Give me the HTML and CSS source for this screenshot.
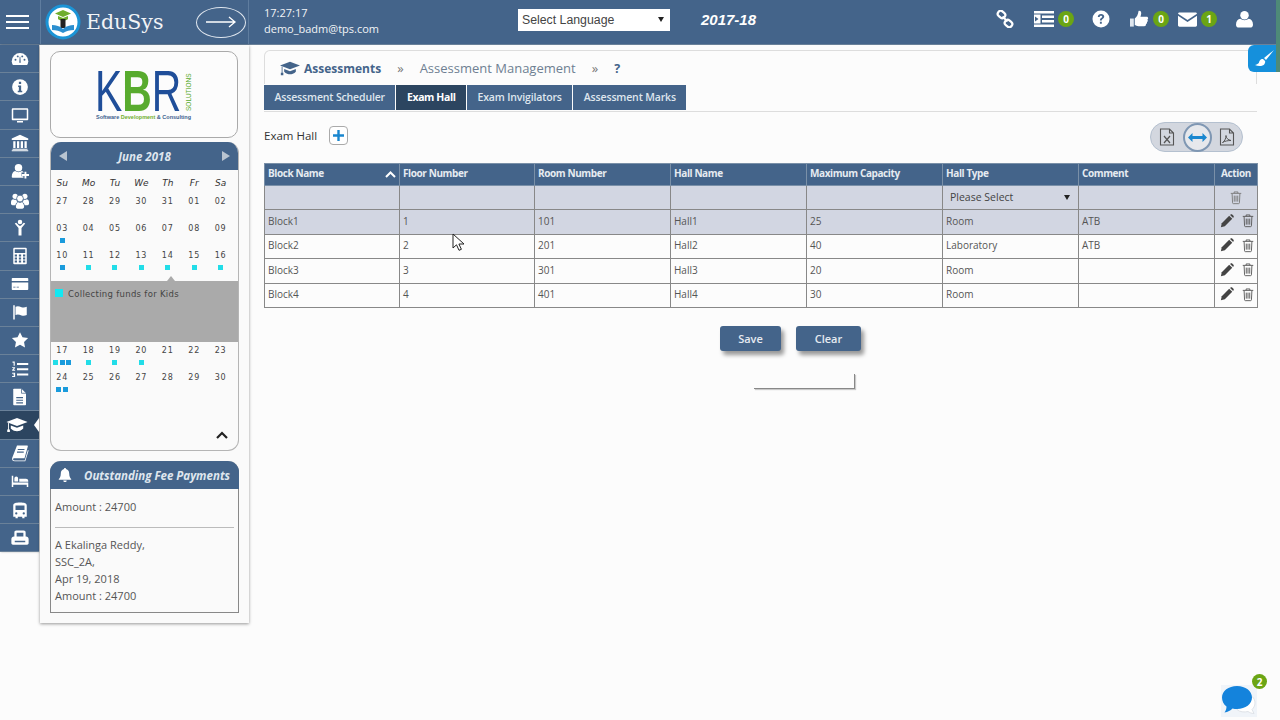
FILE: index.html
```html
<!DOCTYPE html>
<html lang="en">
<head>
    <meta charset="UTF-8">
    <title>EduSys - Exam Hall</title>
    <link rel="stylesheet" href="styles.css">
</head>
<body>
    <!-- shared icons -->
    <svg class="defs" width="0" height="0">
        <symbol id="i-trash" viewBox="0 0 16 18">
            <path d="M1 3.5h14M5.5 3.3V1.6h5v1.7M2.8 3.8l.6 12.2c0 .7.5 1.2 1.1 1.2h7c.6 0 1.1-.5 1.1-1.2l.6-12.2M5.7 6.5v8M8 6.5v8M10.3 6.5v8" fill="none" stroke="currentColor" stroke-width="1.2"/>
        </symbol>
        <symbol id="i-pencil" viewBox="0 0 16 16">
            <path d="M1 15l1-4.500L10.500 2l3.500 3.500L5.500 14z" fill="#444"/>
            <path d="M11.500 1l1-.6c.5-.3 1-.2 1.400.2l1.500 1.500c.4.4.5.9.2 1.400L15 4.500z" fill="#444"/>
        </symbol>
        <symbol id="i-cap" viewBox="0 0 24 18">
            <path d="M12 1L0 5.500l12 4.500 12-4.500z"/>
            <path d="M5 9.500v3.500c2 2.500 5 3 7 3s5-.5 7-3V9.500L12 12.200z"/>
            <path d="M2 6.500v7.500H1v3h3v-3H3V7z"/>
        </symbol>
    </svg>

    <header class="topbar">
        <button class="menu-btn" type="button"><span></span><span></span><span></span></button>
        <div class="brand">
            <svg class="brand-logo" viewBox="0 0 36 36">
                <circle cx="18" cy="18" r="16" fill="#fff" stroke="#1b94d6" stroke-width="3"/>
                <path d="M18 6l-8 3.500 8 3.500 8-3.500z" fill="#6fae2e"/>
                <path d="M13 12v3c2 2 8 2 10 0v-3l-5 2z" fill="#6fae2e"/>
                <rect x="15.500" y="15" width="5" height="9" fill="#222"/>
                <path d="M7 21c4 0 8 1 11 4 3-3 7-4 11-4v5c-4 0-8 1-11 3-3-2-7-3-11-3z" fill="#2c8fd0"/>
            </svg>
            <span class="brand-name">EduSys</span>
            <span class="brand-arrow">
                <svg width="32" height="12" viewBox="0 0 32 12"><path d="M1 6h29M24 1l6 5-6 5" fill="none" stroke="#fff" stroke-width="1.300"/></svg>
            </span>
        </div>
        <div class="clock">
            <div>17:27:17</div>
            <div>demo_badm@tps.com</div>
        </div>
        <div class="lang-select">Select Language<i class="caret"></i></div>
        <div class="year">2017-18</div>
        <div class="top-icons">
            <svg class="ti ti-link" viewBox="0 0 18 18"><g fill="none" stroke="#fff" stroke-width="2.200"><rect x="1.500" y="1.500" width="8" height="6" rx="3" transform="rotate(40 5.500 4.500)"/><rect x="8.500" y="10.500" width="8" height="6" rx="3" transform="rotate(40 12.500 13.500)"/></g><path d="M6.500 6.500l5 5" stroke="#fff" stroke-width="2"/></svg>
            <svg class="ti ti-list" viewBox="0 0 20 16"><path d="M0 0h20v2.500H0zM0 13.500h20V16H0zM8 4.500h12V7H8zM8 9h12v2.500H8z" fill="#fff"/><path d="M0 3.500h6.500v9H0z" fill="#fff"/><path d="M1 5.500L4.500 8 1 10.500z" fill="#44648a"/></svg>
            <span class="badge">0</span>
            <svg class="ti ti-help" viewBox="0 0 18 18"><circle cx="9" cy="9" r="8.500" fill="#fff"/><path d="M5.800 7c0-2 1.400-3 3.300-3 1.800 0 3.100 1 3.100 2.600 0 2.300-2.400 2.200-2.400 4H7.900c0-2.800 2.300-2.700 2.300-3.900 0-.6-.5-1-1.200-1-.8 0-1.300.5-1.300 1.300zM7.900 11.800h1.900v2H7.900z" fill="#44648a"/></svg>
            <svg class="ti ti-thumb" viewBox="0 0 20 18"><path d="M0 8.500h4V17H0z" fill="#dfe6ee"/><path d="M5 8.500c2-1.500 3.500-4 4-8 2-.5 3 1 2.800 3-.1 1-.5 2-.8 3h6.500c2 0 2 2.500.8 3 .8 1 .5 2.300-.5 2.700.4 1-.1 2-1 2.300.2 1.300-.7 2-1.800 2H9c-2 0-2.500-.8-4-.8z" fill="#fff"/></svg>
            <span class="badge">0</span>
            <svg class="ti ti-mail" viewBox="0 0 20 15"><path d="M0 1.500C0 .7.700 0 1.500 0h17c.8 0 1.500.7 1.500 1.500L10 8z" fill="#fff"/><path d="M0 3.500V13.500c0 .8.700 1.500 1.500 1.500h17c.8 0 1.500-.7 1.500-1.500V3.500L10 10z" fill="#fff"/></svg>
            <span class="badge">1</span>
            <svg class="ti ti-user" viewBox="0 0 18 18"><circle cx="9" cy="5" r="4.500" fill="#fff"/><path d="M0 15c0-4 2-6 4.500-6.300 2.500 2 6.500 2 9 0C16 9 18 11 18 15c0 2-1.500 3-3 3H3c-1.500 0-3-1-3-3z" fill="#fff"/></svg>
        </div>
    </header>

    <div class="layout">
        <!-- Icon menu -->
        <nav class="iconbar">
            <a><svg viewBox="0 0 24 24" fill="#fff"><path d="M12 4a11 11 0 0 0-11 11c0 2 .5 3.500 1.500 5h19c1-1.500 1.500-3 1.500-5A11 11 0 0 0 12 4z"/><g fill="#44648a"><circle cx="6" cy="13" r="1.300"/><circle cx="9" cy="8.500" r="1.300"/><circle cx="15" cy="8.500" r="1.300"/><circle cx="18" cy="13" r="1.300"/><path d="M11 17l.5-8h1l.5 8z"/></g></svg></a>
            <a><svg viewBox="0 0 24 24"><circle cx="12" cy="12" r="10.500" fill="#fff"/><path d="M9.500 10h4v7h1.500v2H9v-2h1.500v-5h-1zM10.500 5h3v3h-3z" fill="#44648a"/></svg></a>
            <a><svg viewBox="0 0 24 24" fill="#fff"><path d="M2.500 3h19c.8 0 1.500.7 1.500 1.500v13c0 .8-.7 1.500-1.500 1.500h-19C1.700 19 1 18.300 1 17.500v-13C1 3.700 1.700 3 2.500 3zM3 5v11.500h18V5zM8 20h8v2H8z"/></svg></a>
            <a><svg viewBox="0 0 24 24" fill="#fff"><path d="M12 1L1 6v2h22V6zM3 9.500h3v9H3zM8 9.500h3v9H8zM13 9.500h3v9h-3zM18 9.500h3v9h-3zM2 19.500h20V21H2zM1 21.500h22V23H1z"/></svg></a>
            <a><svg viewBox="0 0 24 24" fill="#fff"><circle cx="10" cy="7.500" r="5"/><path d="M1 20c0-5 2-7.500 4.500-8 2.500 2 6.500 2 9 0 1 .2 2 .8 2.700 2H14v5h2.500v2H3c-1.500 0-2-.5-2-1zM18 13h2.500v3H24v2.500h-3.500V22H18v-3.500h-3.500V16H18z"/></svg></a>
            <a><svg viewBox="0 0 24 24" fill="#fff"><circle cx="5.500" cy="7" r="3.500"/><circle cx="18.500" cy="7" r="3.500"/><circle cx="12" cy="10" r="4.500" stroke="#44648a"/><path d="M0 15c0-2.500 1.500-4 3-4 1 1 3 1 4 .5.500 2 1.500 3 2 3.500-2 .5-3 2-3 4H2c-1 0-2-1-2-2zM24 15c0-2.500-1.500-4-3-4-1 1-3 1-4 .5-.5 2-1.500 3-2 3.500 2 .5 3 2 3 4h4c1 0 2-1 2-2zM6.500 21c0-3 1.500-5.500 3.500-6 1 1 3 1 4 0 2 .5 3.500 3 3.500 6 0 1.500-1 2.500-2.500 2.500H9c-1.500 0-2.500-1-2.500-2.500z"/></svg></a>
            <a><svg viewBox="0 0 24 24" fill="#fff"><circle cx="12" cy="4" r="3"/><path d="M5 6l2-1 4 4h2l4-4 2 1-5 6v10h-4V12z"/></svg></a>
            <a><svg viewBox="0 0 24 24"><rect x="3" y="1" width="18" height="22" rx="1.500" fill="#fff"/><path d="M5 3h14v5H5zM5 10h3v2.500H5zM10.500 10h3v2.500h-3zM16 10h3v2.500h-3zM5 14h3v2.500H5zM10.500 14h3v2.500h-3zM16 14h3v2.500h-3zM5 18h3v2.500H5zM10.500 18h3v2.500h-3zM16 18h3v2.500h-3z" fill="#44648a"/></svg></a>
            <a><svg viewBox="0 0 24 24"><path d="M1 5c0-.6.4-1 1-1h20c.6 0 1 .4 1 1v3H1zM1 10h22v9c0 .6-.4 1-1 1H2c-.6 0-1-.4-1-1z" fill="#fff"/><path d="M3 15.500h3v1.200H3zM7.500 15.500h3v1.200h-3z" fill="#44648a"/></svg></a>
            <a><svg viewBox="0 0 24 24" fill="#fff"><path d="M3 3h2v19H3zM6 5c3-1.500 5-.5 8 .5 2.500.8 4.500.5 7-.5v11c-2.500 1.200-4.500 1.500-7 .5-3-1-5-2-8-.5z"/></svg></a>
            <a><svg viewBox="0 0 24 24" fill="#fff"><path d="M12 1.500l3.300 6.800 7.500 1-5.400 5.200 1.300 7.500-6.700-3.600L5.300 22l1.300-7.500L1.200 9.300l7.500-1z"/></svg></a>
            <a><svg viewBox="0 0 24 24" fill="#fff"><path d="M8 4h15v2.500H8zM8 11h15v2.500H8zM8 18h15v2.500H8zM2 2h3v5.500H3.500V3.500H2zM1.500 9.500h4v1L3.500 13h2v1.200h-4v-1l2-2.500h-2zM1.500 17h4v5.500h-4v-1.200h2.500v-.9H2.500v-1H4v-1.200H1.500z"/></svg></a>
            <a><svg viewBox="0 0 24 24"><path d="M4 1h10l6 6v15c0 .6-.4 1-1 1H4c-.6 0-1-.4-1-1V2c0-.6.4-1 1-1z" fill="#fff"/><path d="M14 1v6h6" fill="none" stroke="#44648a"/><path d="M7 12h9v1.500H7zM7 15.500h9V17H7zM7 19h9v1.500H7z" fill="#44648a"/></svg></a>
            <a class="active"><svg viewBox="0 0 24 18" fill="#fff"><use href="#i-cap"/></svg></a>
            <a><svg viewBox="0 0 24 24" fill="#fff"><path d="M8 2h14l.5 1-4.500 16H4c-1 0-1.500 1-1.200 1.700.3.8 1 1.300 2 1.300h13.500l4.200-14 1 .8L19 23H5c-2.500 0-4-2-3.500-4.500zM9 6.500v1.500h9V6.500zM8 10v1.500h9V10z"/></svg></a>
            <a><svg viewBox="0 0 24 24" fill="#fff"><path d="M1 5h2v9h20v6h-2v-3H3v3H1zM4.500 8.500a2.500 2.500 0 1 1 5 0v4h-5zM11 9h9c1.500 0 3 1.200 3 3v1H11z"/></svg></a>
            <a><svg viewBox="0 0 24 24"><path d="M3 6c0-3 3-4 9-4s9 1 9 4v15h-3v2h-3v-2H9v2H6v-2H3z" fill="#fff"/><path d="M6 6h12v6H6z" fill="#44648a"/><circle cx="7" cy="16.500" r="1.500" fill="#44648a"/><circle cx="17" cy="16.500" r="1.500" fill="#44648a"/></svg></a>
            <a><svg viewBox="0 0 24 24"><path d="M7 2h10c1.500 0 2.500 1 2.500 2.500V10H4.500V4.500C4.500 3 5.500 2 7 2zM4 10h16c2 0 3.500 1.500 3.500 3.500V19c0 1-1 2-2 2h-19c-1 0-2-1-2-2v-5.500C.500 11.500 2 10 4 10z" fill="#fff"/><path d="M7.500 5h9v5h-9zM5 15.500h14v2H5z" fill="#44648a"/></svg></a>
        </nav>

        <!-- Side panel -->
        <aside class="sidepanel">
            <div class="org-logo">
                <svg width="110" height="76" viewBox="0 0 110 76">
                    <text class="kbr" transform="translate(6 54) scale(.717 1)">K<tspan class="kbr-b">B</tspan>R</text>
                    <text class="kbr-sol" transform="translate(102 54) rotate(-90)">SOLUTIONS</text>
                    <text class="kbr-tag" x="7" y="62">Software <tspan fill="#6fae2e">Development</tspan> &amp; Consulting</text>
                </svg>
            </div>

            <section class="calendar">
                <div class="cal-head">
                    <i class="tri-left"></i>
                    <span>June 2018</span>
                    <i class="tri-right"></i>
                </div>
                <div class="cal-grid">
                    <div class="wd">Su</div><div class="wd">Mo</div><div class="wd">Tu</div><div class="wd">We</div><div class="wd">Th</div><div class="wd">Fr</div><div class="wd">Sa</div>
                    <div class="day">27</div><div class="day">28</div><div class="day">29</div><div class="day">30</div><div class="day">31</div><div class="day">01</div><div class="day">02</div>
                    <div class="day">03<p><b class="blue"></b></p></div><div class="day">04</div><div class="day">05</div><div class="day">06</div><div class="day">07</div><div class="day">08</div><div class="day">09</div>
                    <div class="day">10<p><b class="blue"></b></p></div><div class="day">11<p><b></b></p></div><div class="day">12<p><b></b></p></div><div class="day">13<p><b></b></p></div><div class="day">14<p><b></b></p></div><div class="day">15<p><b></b></p></div><div class="day">16<p><b></b></p></div>
                    <div class="event"><b></b>Collecting funds for Kids</div>
                    <div class="day">17<p><b></b><b class="blue"></b><b class="blue"></b></p></div><div class="day">18<p><b></b></p></div><div class="day">19<p><b></b></p></div><div class="day">20<p><b></b></p></div><div class="day">21</div><div class="day">22</div><div class="day">23</div>
                    <div class="day">24<p><b class="blue"></b><b class="blue"></b></p></div><div class="day">25</div><div class="day">26</div><div class="day">27</div><div class="day">28</div><div class="day">29</div><div class="day">30</div>
                </div>
                <div class="cal-foot">
                    <svg width="12" height="8" viewBox="0 0 12 8"><path d="M1 7l5-5 5 5" fill="none" stroke="#222" stroke-width="2.200"/></svg>
                </div>
            </section>

            <section class="fees">
                <div class="fees-head">
                    <svg width="14" height="14" viewBox="0 0 14 14"><path d="M7 0c.6 0 1 .4 1 1 2.300.5 3.200 2.500 3.200 4.500 0 3 1 4.500 2 5.500v.8H.8V11c1-1 2-2.500 2-5.500C2.800 3.500 3.700 1.500 6 1c0-.6.400-1 1-1zM5.300 12.500h3.400c0 1-.7 1.500-1.700 1.500s-1.700-.5-1.700-1.500z" fill="#fff"/></svg>
                    <span>Outstanding Fee Payments</span>
                </div>
                <div class="fees-body">
                    <p>Amount : 24700</p>
                    <hr>
                    <p>A Ekalinga Reddy,</p>
                    <p>SSC_2A,</p>
                    <p>Apr 19, 2018</p>
                    <p>Amount : 24700</p>
                </div>
            </section>
        </aside>

        <main class="content">
            <div class="crumbs">
                <svg class="crumb-icon" width="20" height="15"><use href="#i-cap"/></svg>
                <strong>Assessments</strong>
                <em>»</em>
                <span>Assessment Management</span>
                <em>»</em>
                <strong class="crumb-q">?</strong>
            </div>

            <div class="tabs">
                <a>Assessment Scheduler</a>
                <a class="active">Exam Hall</a>
                <a>Exam Invigilators</a>
                <a>Assessment Marks</a>
            </div>

            <div class="title-row">
                <span>Exam Hall</span>
                <button class="add-btn" type="button">
                    <svg width="11" height="11" viewBox="0 0 11 11"><path d="M4.300 0h2.400v4.300H11v2.400H6.700V11H4.300V6.700H0V4.300h4.300z" fill="#1a87cf"/></svg>
                </button>
                <div class="export-pill">
                    <svg width="16" height="18" viewBox="0 0 16 18"><path d="M1.500 1h9l4 4v12h-13zM10.500 1v4h4" fill="none" stroke="#555" stroke-width="1.100"/><path d="M5 8l6 7M11 8l-6 7" stroke="#555" stroke-width="1.200"/></svg>
                    <span class="fit-btn">
                        <svg width="19" height="9" viewBox="0 0 19 9"><path d="M0 4.500L4.500 0v3h10V0L19 4.500 14.500 9V6h-10v3z" fill="#1a87cf"/></svg>
                    </span>
                    <svg width="16" height="18" viewBox="0 0 16 18"><path d="M1.500 1h9l4 4v12h-13zM10.500 1v4h4" fill="none" stroke="#555" stroke-width="1.100"/><path d="M3.500 14.500c2-1 3.500-4 3.500-7 0 2.500 2 4.500 5 5-3 0-6 .5-8.500 2z" fill="none" stroke="#555"/></svg>
                </div>
            </div>

            <table class="grid">
                <thead>
                    <tr>
                        <th>Block Name<svg class="sort" width="11" height="7" viewBox="0 0 11 7"><path d="M1 6l4.500-4.500L10 6" fill="none" stroke="#fff" stroke-width="2"/></svg></th>
                        <th>Floor Number</th>
                        <th>Room Number</th>
                        <th>Hall Name</th>
                        <th>Maximum Capacity</th>
                        <th>Hall Type</th>
                        <th>Comment</th>
                        <th class="center">Action</th>
                    </tr>
                </thead>
                <tbody>
                    <tr class="filter">
                        <td></td><td></td><td></td><td></td><td></td>
                        <td><div class="type-select">Please Select<i class="caret"></i></div></td>
                        <td></td>
                        <td class="center"><svg class="trash muted"><use href="#i-trash"/></svg></td>
                    </tr>
                    <tr class="hl">
                        <td>Block1</td><td>1</td><td>101</td><td>Hall1</td><td>25</td><td>Room</td><td>ATB</td>
                        <td class="actions"><svg class="pencil"><use href="#i-pencil"/></svg><svg class="trash"><use href="#i-trash"/></svg></td>
                    </tr>
                    <tr>
                        <td>Block2</td><td>2</td><td>201</td><td>Hall2</td><td>40</td><td>Laboratory</td><td>ATB</td>
                        <td class="actions"><svg class="pencil"><use href="#i-pencil"/></svg><svg class="trash"><use href="#i-trash"/></svg></td>
                    </tr>
                    <tr class="tall">
                        <td>Block3</td><td>3</td><td>301</td><td>Hall3</td><td>20</td><td>Room</td><td></td>
                        <td class="actions"><svg class="pencil"><use href="#i-pencil"/></svg><svg class="trash"><use href="#i-trash"/></svg></td>
                    </tr>
                    <tr>
                        <td>Block4</td><td>4</td><td>401</td><td>Hall4</td><td>30</td><td>Room</td><td></td>
                        <td class="actions"><svg class="pencil"><use href="#i-pencil"/></svg><svg class="trash"><use href="#i-trash"/></svg></td>
                    </tr>
                </tbody>
            </table>

            <div class="form-actions">
                <button class="btn btn-save" type="button">Save</button>
                <button class="btn btn-clear" type="button">Clear</button>
            </div>
            <div class="ghost-box"></div>
        </main>
    </div>

    <!-- overlays -->
    <div class="brush-btn">
        <svg width="22" height="20" viewBox="0 0 22 20"><path d="M21 1L11 9l2 2zM10 10c-3 0-3.500 2-4 3.500-.3 1-1.500 1.800-4 2.500 3 1.500 8 1.500 9.500-1 .8-1.300.8-2.500.5-3z" fill="#fff"/></svg>
    </div>
    <div class="green-strip"></div>
    <svg class="cursor" width="13" height="18" viewBox="0 0 13 18"><path d="M1 1v14l3.500-3.200 2.500 5.500 2.400-1-2.500-5.300H12z" fill="#fff" stroke="#222" stroke-width="1"/></svg>
    <div class="chat">
        <svg width="36" height="32" viewBox="0 0 36 32">
            <path d="M24 9c6 0 10 4 10 9 0 3-1.500 5-3 6.500l2 4c-2.500 0-4.500-1-6-2-3 1-9 .5-11-2z" fill="#fff" stroke="#dfe3e8"/>
            <path d="M16 1c8.500 0 15 5 15 11.500S24.500 24 16 24c-1.500 0-3 0-4.500-.5C9.500 25.500 7 27 3.500 27.500 5 25.500 5.500 23.500 5.500 21.500 2.500 19.500 1 16 1 12.500 1 6 7.500 1 16 1z" fill="#1483dc"/>
        </svg>
        <span class="badge">2</span>
    </div>
</body>
</html>
```

FILE: styles.css
```css
/* General */
html, body {
    margin: 0;
    padding: 0;
    height: 100%;
}

body {
    position: relative;
    height: 720px;
    overflow: hidden;
    background: #fcfcfc;
    font-family: 'Open Sans', sans-serif;
    font-size: 10px;
    color: #444;
}

.defs {
    position: absolute;
}

.caret {
    width: 0;
    height: 0;
    border-left: 3px solid transparent;
    border-right: 3px solid transparent;
    border-top: 5px solid #222;
}

.badge {
    display: flex;
    justify-content: center;
    align-items: center;
    width: 16px;
    height: 16px;
    border-radius: 50%;
    background: #6ba514;
    color: #fff;
    font-size: 10px;
    font-weight: 700;
}

/* Top bar */
.topbar {
    display: flex;
    align-items: center;
    height: 45px;
    background: #44648a;
    color: #fff;
    border-bottom: 1px solid #6a8199;
    box-sizing: border-box;
}

.menu-btn {
    display: flex;
    flex-direction: column;
    justify-content: center;
    gap: 4px;
    width: 40px;
    height: 100%;
    padding: 0 11px 0 6px;
    background: none;
    border: none;
}

.menu-btn span {
    display: block;
    height: 2px;
    background: #fff;
}

.brand {
    display: flex;
    align-items: center;
    width: 209px;
    height: 100%;
    box-sizing: border-box;
    padding: 0 2px 0 4px;
    border: 1px solid #5f7d9f;
    border-width: 0 1px;
}

.brand-logo {
    width: 36px;
    height: 36px;
}

.brand-name {
    margin-left: 5px;
    font-family: 'DejaVu Serif', serif;
    font-size: 20.500px;
    color: #f2f4f7;
}

.brand-arrow {
    display: flex;
    justify-content: center;
    align-items: center;
    width: 48px;
    height: 29px;
    margin-left: auto;
    border: 1px solid #dfe6ee;
    border-radius: 50%;
}

.clock {
    width: 269px;
    padding: 0 0 3px 15px;
    box-sizing: border-box;
    font-size: 11px;
    line-height: 16px;
    color: #f2f4f7;
}

.lang-select {
    display: flex;
    justify-content: space-between;
    align-items: center;
    width: 152px;
    height: 22px;
    margin-bottom: 5px;
    box-sizing: border-box;
    padding: 0 6px 0 4px;
    background: #fff;
    color: #444;
    font-family: 'Liberation Sans', sans-serif;
    font-size: 12.300px;
}

.year {
    margin: 0 0 5px 31px;
    font-family: 'Liberation Sans', sans-serif;
    font-size: 15px;
    font-style: italic;
    font-weight: 700;
}

.top-icons {
    display: flex;
    align-items: center;
    margin: 0 0 6px auto;
    padding-right: 27px;
}

.ti { height: 18px; }
.ti-link { width: 18px; }
.ti-list { width: 20px; height: 16px; margin-left: 20px; margin-right: 4px; }
.ti-help { width: 18px; margin-left: 18px; }
.ti-thumb { width: 19px; margin-left: 20px; margin-right: 4px; }
.ti-mail { width: 19px; height: 15px; margin-left: 9px; margin-right: 4px; }
.ti-user { width: 17px; margin-left: 19px; }

/* Page layout */
.layout {
    display: flex;
    align-items: flex-start;
}

.iconbar {
    display: flex;
    flex-direction: column;
    width: 39px;
    background: #44648a;
    box-shadow: 1px 0 2px rgba(0, 0, 0, 0.25);
}

.iconbar a {
    position: relative;
    display: flex;
    justify-content: center;
    align-items: center;
    height: 27.200px;
    border-bottom: 1px solid #6a8199;
}

.iconbar svg {
    width: 18px;
    height: 18px;
}

.iconbar a.active {
    background: #2c4560;
}

.iconbar a.active svg {
    width: 22px;
    height: 16px;
    margin-right: 6px;
}

.iconbar a.active::after {
    content: '';
    position: absolute;
    right: 0;
    top: 7px;
    border: 7px solid transparent;
    border-left-width: 0;
    border-right: 5px solid #fff;
}

/* Side panel */
.sidepanel {
    width: 209px;
    height: 578px;
    margin-left: 1px;
    padding: 6px 10px 0;
    box-sizing: border-box;
    background: #fafafa;
    box-shadow: 0 1px 3px rgba(0, 0, 0, 0.4);
}

.org-logo {
    display: flex;
    justify-content: center;
    align-items: center;
    width: 188px;
    height: 87px;
    box-sizing: border-box;
    border: 1px solid #aaa;
    border-radius: 10px;
    background: #fcfcfc;
}

.org-logo text {
    font-family: 'Liberation Sans', sans-serif;
}

.kbr {
    font-size: 57px;
    fill: #1f4e99;
}

.kbr-b {
    fill: #58ab2e;
    font-weight: 700;
}

.kbr-sol {
    font-size: 6.500px;
    fill: #58ab2e;
}

.kbr-tag {
    font-size: 5.500px;
    font-weight: 700;
    fill: #3c5f8e;
}

.calendar {
    width: 189px;
    height: 309px;
    margin-top: 4px;
    box-sizing: border-box;
    border: 1px solid #b5b5b5;
    border-top: none;
    border-radius: 11px;
    background: #fafafa;
    overflow: hidden;
}

.cal-head {
    display: flex;
    justify-content: space-between;
    align-items: center;
    height: 28px;
    padding: 0 8px;
    box-sizing: border-box;
    background: #44648a;
    color: #dfe6ee;
    font-size: 11.500px;
    font-style: italic;
    font-weight: 700;
}

.tri-left, .tri-right {
    border-top: 5px solid transparent;
    border-bottom: 5px solid transparent;
}

.tri-left { border-right: 8px solid #b9c4d0; }
.tri-right { border-left: 8px solid #b9c4d0; }

.cal-grid {
    display: grid;
    grid-template-columns: repeat(7, 26.400px);
    margin-left: -2px;
    text-align: center;
}

.wd {
    height: 23px;
    line-height: 26px;
    font-family: 'DejaVu Sans', sans-serif;
    font-size: 9px;
    font-style: italic;
    color: #333;
}

.day {
    height: 27px;
    padding-top: 3px;
    box-sizing: border-box;
    font-family: 'DejaVu Sans', sans-serif;
    font-size: 8px;
    letter-spacing: 0.8px;
    line-height: 12px;
    color: #444;
}

.day p {
    display: flex;
    justify-content: center;
    gap: 1.500px;
    margin: 3px 0 0;
}

.day b {
    width: 5px;
    height: 5px;
    background: #22dde8;
}

.day b.blue {
    background: #1a9bdc;
}

.event {
    position: relative;
    grid-column: 1 / -1;
    height: 61px;
    margin: 7px -4px 0 2px;
    padding: 8px 0 0 17px;
    box-sizing: border-box;
    background: #aaa;
    text-align: left;
    font-family: 'DejaVu Sans', sans-serif;
    font-size: 8.500px;
    letter-spacing: 0.3px;
    color: #444;
}

.event::before {
    content: '';
    position: absolute;
    top: -5px;
    left: 116px;
    border: 4px solid transparent;
    border-top-width: 0;
    border-bottom: 5px solid #aaa;
}

.event b {
    position: absolute;
    left: 4px;
    top: 8px;
    width: 8px;
    height: 8px;
    background: #13e8f2;
}

.cal-foot {
    display: flex;
    justify-content: flex-end;
    padding: 35px 10px 0 0;
}

.fees {
    width: 189px;
    height: 152px;
    margin-top: 10px;
    box-sizing: border-box;
    border: 1px solid #888;
    border-top: none;
    border-radius: 11px 11px 0 0;
    background: #fafafa;
}

.fees-head {
    display: flex;
    align-items: center;
    gap: 12px;
    height: 28px;
    margin: 0 -1px;
    padding-left: 8px;
    border-radius: 11px 11px 0 0;
    background: #44648a;
    color: #dfe6ee;
    font-size: 11.500px;
    font-style: italic;
    font-weight: 700;
}

.fees-body {
    padding: 9px 4px;
    font-size: 11px;
    line-height: 17px;
    color: #555;
}

.fees-body p {
    margin: 0;
}

.fees-body hr {
    margin: 12px 0 8px;
    border: none;
    border-top: 1px solid #bbb;
}

/* Main content */
.content {
    flex: 1;
    min-width: 0;
    padding: 5px 23px 0 15px;
}

.crumbs {
    display: flex;
    align-items: center;
    height: 34px;
    box-sizing: border-box;
    padding: 1px 0 0 15px;
    border: 1px solid #ddd;
    border-bottom: none;
    border-radius: 6px 6px 0 0;
    font-size: 13px;
    color: #6e7f92;
}

.crumb-icon {
    margin-right: 4px;
    fill: #44648a;
}

.crumbs strong {
    color: #44648a;
    font-size: 12px;
}

.crumbs em {
    margin: 0 16px;
    font-style: normal;
    color: #777;
}

.crumbs .crumb-q {
    font-size: 12.500px;
}

.tabs {
    display: flex;
    gap: 1px;
    height: 27px;
    margin-top: 1px;
    box-sizing: border-box;
    border-bottom: 1px solid #ddd;
}

.tabs a {
    height: 25px;
    padding: 0 10.500px;
    line-height: 25px;
    background: #44648a;
    color: #dfe6ee;
    font-size: 10.500px;
    font-weight: 600;
    letter-spacing: -0.15px;
}

.tabs a.active {
    background: #2c4560;
    color: #fff;
    font-weight: 700;
    letter-spacing: -0.4px;
}

.title-row {
    display: flex;
    align-items: center;
    height: 51px;
    padding-bottom: 5px;
    box-sizing: border-box;
    font-size: 11.500px;
    color: #333;
}

.add-btn {
    display: flex;
    justify-content: center;
    align-items: center;
    width: 19px;
    height: 19px;
    margin: 0 0 0 12px;
    padding: 0;
    border: 1px solid #aaa;
    border-radius: 4px;
    background: #fff;
}

.export-pill {
    display: flex;
    justify-content: space-between;
    align-items: center;
    width: 93px;
    height: 30px;
    margin: 4px 14px 0 auto;
    padding: 0 7px 0 8px;
    box-sizing: border-box;
    border: 1px solid #b4c0cf;
    border-radius: 15px;
    background: #d3d7df;
}

.fit-btn {
    display: flex;
    justify-content: center;
    align-items: center;
    width: 29px;
    height: 29px;
    box-sizing: border-box;
    border: 2px solid #7f97b3;
    border-radius: 50%;
    background: #e6e8ec;
}

/* Table */
.grid {
    width: 993px;
    border-collapse: collapse;
    table-layout: fixed;
    font-size: 10px;
    color: #555;
}

.grid th, .grid td {
    padding: 0 3px;
    border: 1px solid #888;
    text-align: left;
    box-sizing: border-box;
}

.grid th {
    position: relative;
    width: 136px;
    height: 22px;
    padding-bottom: 3px;
    background: #44648a;
    border-color: #7a90a8;
    color: #e6ebf1;
    font-weight: 700;
    letter-spacing: -0.4px;
}

.grid th:nth-child(1),
.grid th:nth-child(2) { width: 135px; }
.grid th:nth-child(8) { width: 43px; }

.grid td {
    height: 24px;
    padding-bottom: 3px;
}

.grid .tall td,
.grid .hl td {
    height: 25px;
}

.grid .filter td, .grid .hl td {
    background: #d2d6e2;
}

.grid .filter td {
    padding-bottom: 1px;
}

.grid .center {
    padding: 0 0 3px;
    text-align: center;
}

.sort {
    position: absolute;
    right: 3px;
    top: 7px;
}

.type-select {
    display: flex;
    justify-content: space-between;
    align-items: center;
    padding: 0 5px 0 4px;
    font-size: 10.500px;
    color: #444;
}

.actions {
    white-space: nowrap;
}

.grid .actions {
    padding: 0 0 3px 5px;
}

.pencil {
    width: 14px;
    height: 14px;
    vertical-align: middle;
}

.trash {
    width: 12px;
    height: 15px;
    margin-left: 8px;
    color: #555;
    vertical-align: middle;
}

.trash.muted {
    margin-left: 0;
    color: #777;
}

/* Buttons */
.form-actions {
    display: flex;
    gap: 15px;
    margin: 18px 0 0 456px;
}

.btn {
    height: 25px;
    padding: 0;
    border: none;
    border-radius: 3px;
    background: #44648a;
    box-shadow: 3px 4px 4px rgba(0, 0, 0, 0.4);
    color: #e6ebf1;
    font-family: 'Open Sans', sans-serif;
    font-size: 11px;
    font-weight: 600;
}

.btn-save { width: 61px; }
.btn-clear { width: 65px; }

.ghost-box {
    width: 100px;
    height: 14px;
    margin: 23px 0 0 490px;
    border-right: 1px solid #888;
    border-bottom: 1px solid #888;
    box-shadow: 1px 1px 1px rgba(0, 0, 0, 0.2);
}

/* Overlays */
.green-strip {
    position: absolute;
    top: 0;
    right: 0;
    width: 4px;
    height: 72px;
    background: #4e8a78;
}

.brush-btn {
    position: absolute;
    top: 45px;
    right: 0;
    display: flex;
    align-items: center;
    justify-content: center;
    width: 32px;
    height: 27px;
    border-radius: 6px 0 0 6px;
    background: #1590dc;
}

.cursor {
    position: absolute;
    left: 452px;
    top: 233px;
}

.chat {
    position: absolute;
    right: 6px;
    bottom: 2px;
    width: 54px;
    height: 44px;
}

.chat svg {
    position: absolute;
    left: 1px;
    bottom: 1px;
    background: #f0f4f9;
}

.chat .badge {
    position: absolute;
    right: 7px;
    top: 0;
    width: 15px;
    height: 15px;
}
```
